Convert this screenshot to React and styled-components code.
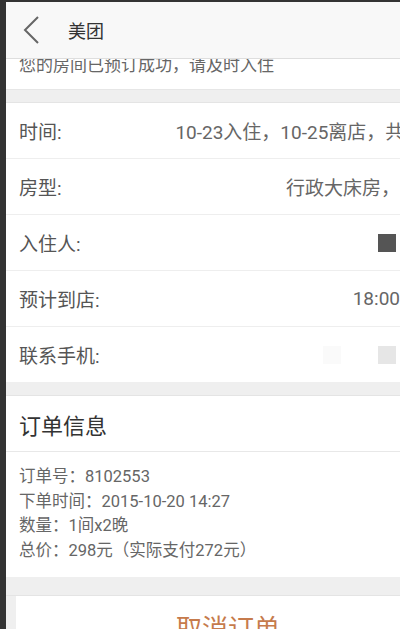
import React from 'react';
import styled, { createGlobalStyle } from 'styled-components';

const GlobalStyle = createGlobalStyle`
  html, body {
    margin: 0;
    padding: 0;
    background: #333333;
    overflow: hidden;
  }
  body {
    font-family: Roboto, "Noto Sans CJK SC", "Noto Sans", sans-serif;
  }
`;

const Screen = styled.div`
  width: 394px;
  height: 627px;
  margin: 2px 0 0 6px;
  overflow: hidden;
  background: #efefef;
`;

const Page = styled.div`
  width: 444px;
`;

const Header = styled.div`
  height: 56px;
  display: flex;
  align-items: center;
  background: #f8f8f8;
  border-bottom: 1px solid #dedede;
  width: 394px;
`;

const BackButton = styled.div`
  width: 30px;
  margin-left: 16px;
  display: flex;
  align-items: center;
`;

const Title = styled.div`
  margin-left: 16px;
  font-size: 18px;
  color: #333333;
`;

const Notice = styled.div`
  height: 30px;
  overflow: hidden;
  background: #ffffff;
  padding-left: 13px;
  border-bottom: 1px solid #e6e6e6;
`;

const NoticeText = styled.div`
  margin-top: -4px;
  line-height: 20px;
  font-size: 17px;
  color: #666666;
`;

const Gap = styled.div`
  height: ${(p) => p.$h}px;
  background: #efefef;
  border-bottom: 1px solid #e4e4e4;
`;

const Panel = styled.div`
  background: #ffffff;
`;

const Row = styled.div`
  height: 55px;
  display: flex;
  align-items: center;
  justify-content: space-between;
  padding: 0 50px 0 13px;
  border-bottom: 1px solid #eeeeee;
  &:last-child {
    border-bottom: none;
  }
`;

const Label = styled.span`
  font-size: 19px;
  color: #555555;
  white-space: nowrap;
`;

const Value = styled.span`
  font-size: 19px;
  color: #666666;
  white-space: nowrap;
  margin-right: ${(p) => -(p.$bleed || 0)}px;
  display: flex;
  align-items: center;
  gap: 37px;
`;

const Masked = styled.span`
  display: inline-block;
  width: 18px;
  height: 18px;
  background: ${(p) => p.$tone};
`;

const SectionTitle = styled.div`
  height: 55px;
  display: flex;
  align-items: center;
  padding-left: 13px;
  font-size: 22px;
  color: #333333;
  border-bottom: 1px solid #e8e8e8;
`;

const Details = styled.div`
  padding: 13px 13px 14px;
`;

const DetailLine = styled.div`
  font-size: 16.5px;
  line-height: 24.5px;
  color: #666666;
`;

const CancelButton = styled.div`
  margin: 0 10px;
  height: 60px;
  background: #ffffff;
  display: flex;
  align-items: center;
  justify-content: center;
  font-size: 26px;
  color: #c67b4c;
`;

const rows = [
  { label: '时间:', value: '10-23入住，10-25离店，共2晚', bleed: 34 },
  { label: '房型:', value: '行政大床房，' },
  { label: '入住人:', mask: ['#555555'], bleed: -4 },
  { label: '预计到店:', value: '18:00' },
  { label: '联系手机:', mask: ['#fafafa', '#e6e6e6'], bleed: -4 },
];

const details = [
  '订单号：8102553',
  '下单时间：2015-10-20 14:27',
  '数量：1间x2晚',
  '总价：298元（实际支付272元）',
];

export default function App() {
  return (
    <Screen>
      <GlobalStyle />
      <Header>
        <BackButton>
          <svg width="18" height="28" viewBox="0 0 18 28">
            <path d="M16 1 L3 14 L16 27" fill="none" stroke="#666" strokeWidth="2" />
          </svg>
        </BackButton>
        <Title>美团</Title>
      </Header>
      <Page>
        <Notice>
          <NoticeText>您的房间已预订成功，请及时入住</NoticeText>
        </Notice>
        <Gap $h={12} />
        <Panel>
          {rows.map((r) => (
            <Row key={r.label}>
              <Label>{r.label}</Label>
              <Value $bleed={r.bleed}>
                {r.value}
                {r.mask && r.mask.map((t) => <Masked key={t} $tone={t} />)}
              </Value>
            </Row>
          ))}
        </Panel>
        <Gap $h={13} />
        <Panel>
          <SectionTitle>订单信息</SectionTitle>
          <Details>
            {details.map((d) => (
              <DetailLine key={d}>{d}</DetailLine>
            ))}
          </Details>
        </Panel>
        <Gap $h={18} />
        <CancelButton>取消订单</CancelButton>
      </Page>
    </Screen>
  );
}
